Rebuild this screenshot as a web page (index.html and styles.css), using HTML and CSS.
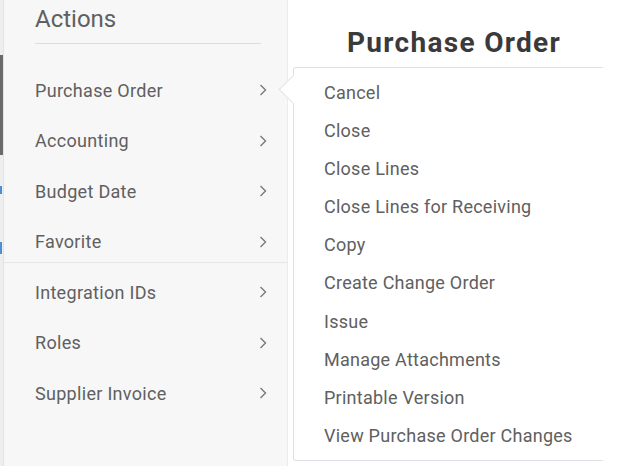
FILE: index.html
```html
<!DOCTYPE html>
<html>
<head>
<meta charset="utf-8">
<link rel="stylesheet" href="styles.css">
</head>
<body>
<div class="page">
  <div class="edge">
    <div class="edge-dark"></div>
    <div class="edge-blue edge-blue-1"></div>
    <div class="edge-blue edge-blue-2"></div>
  </div>
  <aside class="sidebar">
    <div class="sidebar-title">Actions</div>
    <ul class="menu">
      <li class="menu-item"><span>Purchase Order</span><svg class="chev" viewBox="0 0 8 12" width="8" height="12"><polyline points="1.5,1 6.5,6 1.5,11"/></svg></li>
      <li class="menu-item"><span>Accounting</span><svg class="chev" viewBox="0 0 8 12" width="8" height="12"><polyline points="1.5,1 6.5,6 1.5,11"/></svg></li>
      <li class="menu-item"><span>Budget Date</span><svg class="chev" viewBox="0 0 8 12" width="8" height="12"><polyline points="1.5,1 6.5,6 1.5,11"/></svg></li>
      <li class="menu-item short"><span>Favorite</span><svg class="chev" viewBox="0 0 8 12" width="8" height="12"><polyline points="1.5,1 6.5,6 1.5,11"/></svg></li>
      <li class="menu-item sep"><span>Integration IDs</span><svg class="chev" viewBox="0 0 8 12" width="8" height="12"><polyline points="1.5,1 6.5,6 1.5,11"/></svg></li>
      <li class="menu-item"><span>Roles</span><svg class="chev" viewBox="0 0 8 12" width="8" height="12"><polyline points="1.5,1 6.5,6 1.5,11"/></svg></li>
      <li class="menu-item"><span>Supplier Invoice</span><svg class="chev" viewBox="0 0 8 12" width="8" height="12"><polyline points="1.5,1 6.5,6 1.5,11"/></svg></li>
    </ul>
  </aside>
  <main class="main">
    <h1 class="title">Purchase Order</h1>
    <div class="submenu">
      <div class="pointer"></div>
      <ul class="sublist">
        <li>Cancel</li>
        <li>Close</li>
        <li>Close Lines</li>
        <li>Close Lines for Receiving</li>
        <li>Copy</li>
        <li>Create Change Order</li>
        <li>Issue</li>
        <li>Manage Attachments</li>
        <li>Printable Version</li>
        <li>View Purchase Order Changes</li>
      </ul>
    </div>
  </main>
</div>
</body>
</html>
```

FILE: styles.css
```css
html, body {
  margin: 0;
  padding: 0;
  background: #ffffff;
}
body {
  font-family: Roboto, "Liberation Sans", Arial, sans-serif;
  width: 641px;
  height: 466px;
  overflow: hidden;
}
.page {
  display: flex;
  height: 466px;
}
.edge {
  width: 3px;
  background: #eeeeee;
  display: flex;
  flex-direction: column;
}
.edge-dark {
  margin-top: 55px;
  height: 100px;
  background: #6a6a6a;
}
.edge-blue {
  background: #4a90d9;
  width: 2px;
}
.edge-blue-1 {
  margin-top: 31px;
  height: 8px;
}
.edge-blue-2 {
  margin-top: 48px;
  height: 12px;
}
.sidebar {
  width: 283px;
  background: #f7f7f7;
  border-left: 1px solid #e3e3e3;
  border-right: 1px solid #ececec;
  display: flex;
  flex-direction: column;
}
.sidebar-title {
  margin: 5px 26px 0 31px;
  font-size: 24px;
  line-height: 28px;
  color: #606060;
  padding-bottom: 10px;
  border-bottom: 1px solid #dcdcdc;
}
.menu {
  list-style: none;
  margin: 21px 0 0 0;
  padding: 0;
}
.menu-item {
  height: 50.5px;
  display: flex;
  align-items: center;
  justify-content: space-between;
  padding: 0 20px 0 31px;
  font-size: 18px;
  letter-spacing: 0.3px;
  color: #606060;
}
.menu-item.short {
  height: 45.5px;
  align-items: flex-start;
}
.menu-item.short span {
  line-height: 50.5px;
}
.menu-item.short .chev {
  margin-top: 19px;
}
.menu-item.sep {
  border-top: 1px solid #e6e6e6;
  padding-top: 4px;
}
.chev {
  fill: none;
  stroke: #7a7a7a;
  stroke-width: 1.4;
}
.main {
  flex: 1;
  padding-left: 5px;
  display: flex;
  flex-direction: column;
}
.title {
  margin: 27px 0 0 54px;
  font-size: 28px;
  line-height: 32px;
  letter-spacing: 1.3px;
  font-weight: 700;
  color: #3a3a3a;
  height: 40px;
}
.submenu {
  position: relative;
  width: 309px;
  border-top: 1px solid #dfe1e6;
  border-left: 1px solid #dfe1e6;
  border-bottom: 1px solid #dfe1e6;
  border-top-left-radius: 3px;
  border-bottom-left-radius: 3px;
  background: #ffffff;
}
.pointer {
  position: absolute;
  left: -11px;
  top: 11px;
  width: 21px;
  height: 21px;
  box-sizing: border-box;
  background: #ffffff;
  border-left: 1px solid #dfe1e6;
  border-bottom: 1px solid #dfe1e6;
  transform: rotate(45deg);
}
.sublist {
  list-style: none;
  margin: 0;
  padding: 6px 0 5px 30px;
}
.sublist li {
  height: 38.1px;
  line-height: 38px;
  font-size: 18px;
  letter-spacing: 0.25px;
  color: #606060;
  white-space: nowrap;
}
```
